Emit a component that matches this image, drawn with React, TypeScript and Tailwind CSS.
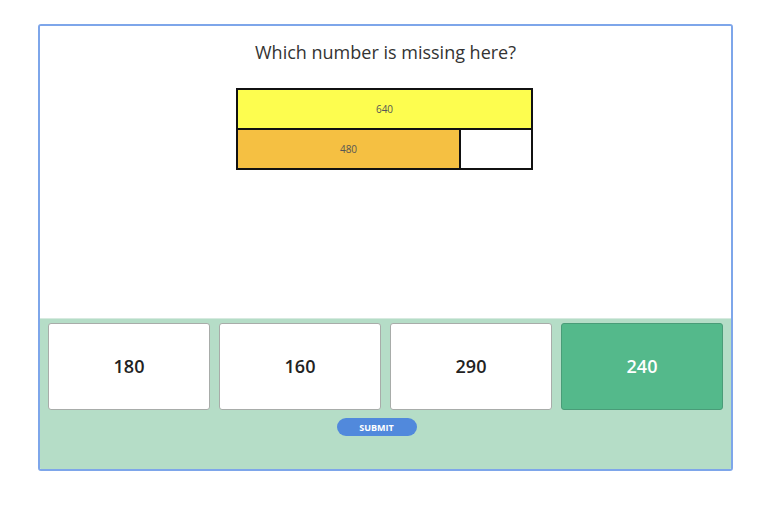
const choices = [
  { label: "180", selected: false },
  { label: "160", selected: false },
  { label: "290", selected: false },
  { label: "240", selected: true },
];

export default function App() {
  return (
    <div
      className="w-[768px] h-[510px] bg-white pt-[24px] pl-[38px]"
      style={{ fontFamily: "'Open Sans', 'Noto Sans', sans-serif" }}
    >
      <div className="w-[695px] h-[447px] border-2 border-[#7ea6ea] rounded-[3px] flex flex-col overflow-hidden">
        <div className="h-[292px] bg-white flex flex-col items-center">
          <h1 className="mt-[14px] text-[18px] text-[#333] leading-[24px]">
            Which number is missing here?
          </h1>
          <div className="mt-[24px] mr-[2px] w-[297px] border-2 border-[#111] flex flex-col">
            <div className="h-[38px] bg-[#fdfd4f] flex items-center justify-center text-[10px] text-[#555]">
              640
            </div>
            <div className="h-[40px] flex border-t-2 border-[#111]">
              <div className="w-[223px] bg-[#f5c042] border-r-2 border-[#111] flex items-center justify-center text-[10px] text-[#555]">
                480
              </div>
              <div className="flex-1 bg-white" />
            </div>
          </div>
        </div>
        <div className="flex-1 bg-[#b5ddc7] border-t border-[#d6eadf] px-[8px] pt-[4px] flex flex-col items-center">
          <div className="w-full grid grid-cols-4 gap-[9px]">
            {choices.map((c) => (
              <div
                key={c.label}
                className={
                  c.selected
                    ? "h-[87px] rounded-[3px] border border-[#4a9c78] bg-[#54b98b] flex items-center justify-center text-[18px] font-semibold text-white"
                    : "h-[87px] rounded-[3px] border border-[#a8aca9] bg-white flex items-center justify-center text-[18px] font-semibold text-[#222]"
                }
              >
                {c.label}
              </div>
            ))}
          </div>
          <button className="mt-[8px] mr-[18px] w-[80px] h-[18px] rounded-full bg-[#5189dc] text-white text-[9px] font-bold leading-none">
            SUBMIT
          </button>
        </div>
      </div>
    </div>
  );
}
